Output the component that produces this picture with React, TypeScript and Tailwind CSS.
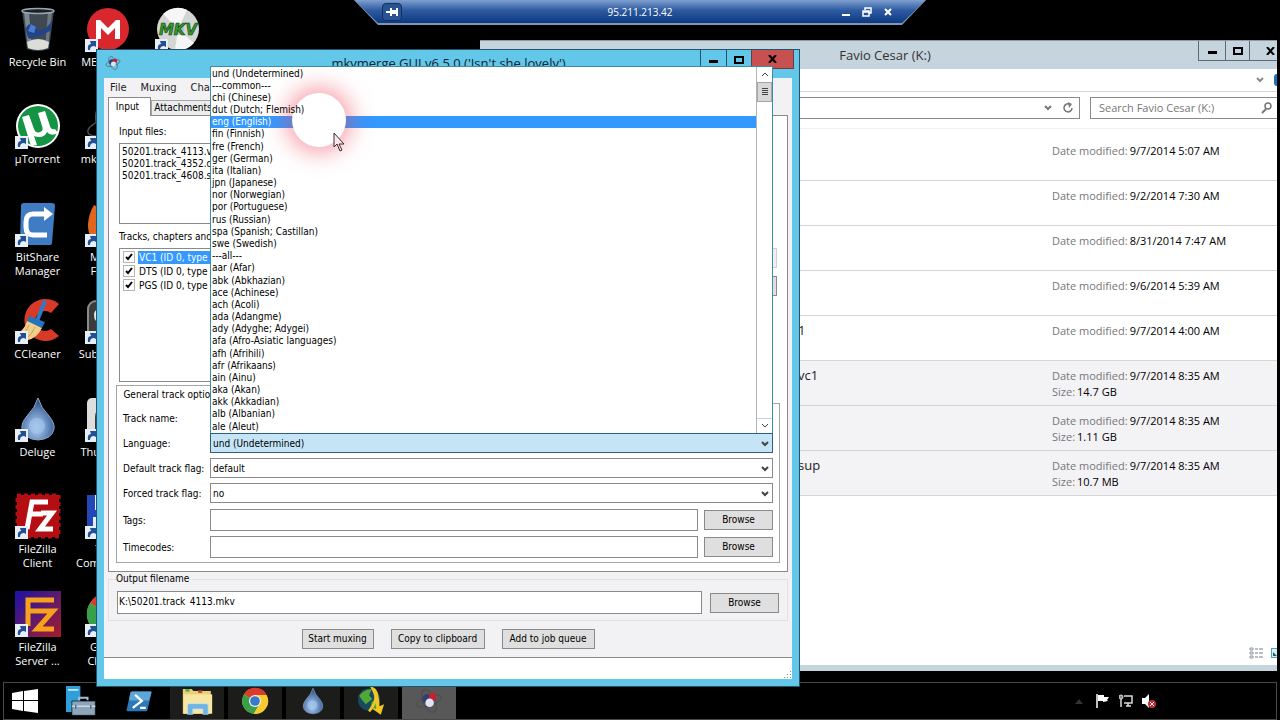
import React, { useState } from 'react';

const LANGUAGES = [
  'und (Undetermined)', '---common---', 'chi (Chinese)', 'dut (Dutch; Flemish)', 'eng (English)',
  'fin (Finnish)', 'fre (French)', 'ger (German)', 'ita (Italian)', 'jpn (Japanese)',
  'nor (Norwegian)', 'por (Portuguese)', 'rus (Russian)', 'spa (Spanish; Castillan)', 'swe (Swedish)',
  '---all---', 'aar (Afar)', 'abk (Abkhazian)', 'ace (Achinese)', 'ach (Acoli)',
  'ada (Adangme)', 'ady (Adyghe; Adygei)', 'afa (Afro-Asiatic languages)', 'afh (Afrihili)', 'afr (Afrikaans)',
  'ain (Ainu)', 'aka (Akan)', 'akk (Akkadian)', 'alb (Albanian)', 'ale (Aleut)',
];

const FILES = [
  { name: '', date: '9/7/2014 5:07 AM' },
  { name: '', date: '9/2/2014 7:30 AM' },
  { name: '', date: '8/31/2014 7:47 AM' },
  { name: '', date: '9/6/2014 5:39 AM' },
  { name: '1', date: '9/7/2014 4:00 AM' },
  { name: 'vc1', date: '9/7/2014 8:35 AM', size: '14.7 GB' },
  { name: '', date: '9/7/2014 8:35 AM', size: '1.11 GB' },
  { name: 'sup', date: '9/7/2014 8:35 AM', size: '10.7 MB' },
];

/* ---------- drawings ---------- */

const RecycleBin = () => (
  <svg viewBox="0 0 46 46" className="h-full w-full">
    <path d="M7 4 L39 4 L34 43 Q23 47 12 43Z" fill="#4b5660" opacity=".85" />
    <path d="M9 6 L14 6 L17 43 L13 42Z" fill="#a9b6c0" opacity=".6" />
    <path d="M33 6 L37 6 L33 42 L30 43Z" fill="#9aa7b2" opacity=".5" />
    <path d="M11 22 q3-6 8-3 q3 4 6 6 l7-4 l5-6 l-2 10 l-8 4 l-13 4 q-3-4-3-11z" fill="#1f4488" />
    <path d="M16 18 l5 3 l-2 6 l-6-2z" fill="#4c7ace" />
    <path d="M12 36 q11-6 22 0 l-1 6 q-10 4-20 0z" fill="#dcdcd8" />
    <ellipse cx="23" cy="5" rx="16" ry="2.5" fill="#1a2026" stroke="#9aa6ae" strokeWidth="1.5" />
  </svg>
);

const Mega = () => (
  <svg viewBox="0 0 46 46" className="h-full w-full">
    <circle cx="23" cy="23" r="21" fill="#d9272e" />
    <path d="M11 33V14h4l8 8 8-8h4v19h-5V22l-7 7-7-7v11z" fill="#fff" />
  </svg>
);

const MkvDisc = () => (
  <svg viewBox="0 0 46 46" className="h-full w-full">
    <circle cx="23" cy="23" r="21" fill="#d4d6d4" />
    <path d="M23 23L8 8A21 21 0 0 1 32 4zM23 23l16 14A21 21 0 0 1 20 44z" fill="#f6f6f6" />
    <circle cx="23" cy="23" r="6" fill="#bbb" />
    <text x="23" y="29" textAnchor="middle" fontFamily="DejaVu Sans" fontWeight="700" fontStyle="italic" fontSize="15" fill="#2f9c2a" stroke="#113a10" strokeWidth=".6">MKV</text>
  </svg>
);

const UTorrent = () => (
  <svg viewBox="0 0 46 46" className="h-full w-full">
    <circle cx="23" cy="23" r="22" fill="#fff" />
    <circle cx="23" cy="23" r="20" fill="#149444" />
    <path d="M7 14l7-2 5 14q2 5 6 3 4-1 2-6l-4-13 7-2 5 15q1 4 5 3l3 4q-7 4-11-1-2 5-8 5-3 0-5-1l3 9-6 1z" fill="#fff" />
  </svg>
);

const Atom = () => (
  <svg viewBox="0 0 46 46" className="h-full w-full">
    <ellipse cx="23" cy="23" rx="21" ry="8" fill="none" stroke="#4c4c50" strokeWidth="1.5" transform="rotate(-18 23 23)" />
    <ellipse cx="23" cy="23" rx="10" ry="20" fill="none" stroke="#4c4c50" strokeWidth="1.5" transform="rotate(-25 23 23)" />
    <circle cx="20" cy="20" r="8" fill="#343c70" />
    <circle cx="29" cy="16" r="6" fill="#c8202c" />
    <circle cx="24" cy="26" r="7" fill="#dfe3f4" />
  </svg>
);

const BitShare = () => (
  <svg viewBox="0 0 46 46" className="h-full w-full">
    <path d="M9 2H37q3 0 3 3L37 42q0 2-3 2H8q-3 0-3-3L6 5q0-3 3-3z" fill="#3f7cc4" />
    <path d="M32 13H18q-7 0-7 8v5q0 8 7 8h14" fill="none" stroke="#fff" strokeWidth="5" />
    <path d="M29 6l9 7-9 7z" fill="#fff" />
  </svg>
);

const Firefox = () => (
  <svg viewBox="0 0 46 46" className="h-full w-full">
    <circle cx="24" cy="24" r="19" fill="#2f4f9c" />
    <path d="M9 4q5 2 6 7 6-5 14-3-9 2-9 9 8-1 10 4-6 0-6 6 6 4 14-3-1 16-16 18Q2 42 3 23 4 12 9 4z" fill="#e2651d" />
  </svg>
);

const CCleaner = () => (
  <svg viewBox="0 0 46 46" className="h-full w-full">
    <path d="M44 6A21 21 0 1 0 44 38l-8-7a10 10 0 1 1 0-16z" fill="#d83a28" />
    <path d="M30 3l-8 20" stroke="#2b7bc9" strokeWidth="4" />
    <path d="M14 18l16 6-3 6-15-6z" fill="#2474bd" />
    <path d="M12 23l15 7q-5 10-14 12L1 36Q9 33 12 23z" fill="#efcf8d" />
    <path d="M14 27q-3 8-8 11M20 29q-3 7-8 11" stroke="#cf9f53" fill="none" />
  </svg>
);

const Subtitle = () => (
  <svg viewBox="0 0 46 46" className="h-full w-full">
    <rect x="3" y="3" width="40" height="40" rx="8" fill="#3b3b3b" stroke="#8b8b8b" strokeWidth="2" />
    <path d="M20 13q-9-2-9 4t6 6 3 8-9 2" stroke="#e6e6e6" strokeWidth="4" fill="none" />
  </svg>
);

const Drop = () => (
  <svg viewBox="0 0 46 46" className="h-full w-full">
    <defs>
      <radialGradient id="drop" cx=".45" cy=".7" r=".6">
        <stop offset="0" stopColor="#b9d4f0" />
        <stop offset=".5" stopColor="#7398c8" />
        <stop offset="1" stopColor="#35598c" />
      </radialGradient>
    </defs>
    <path d="M23 2q3 10 11 18 6 7 5 13-2 10-16 11Q9 43 7 33q-1-6 5-13Q20 12 23 2z" fill="url(#drop)" stroke="#8fa9c9" />
    <circle cx="22" cy="30" r="8" fill="#9fc3ea" opacity=".7" />
  </svg>
);

const Thumb = () => (
  <svg viewBox="0 0 46 46" className="h-full w-full">
    <rect x="2" y="2" width="42" height="42" rx="5" fill="#dedede" />
    <path d="M10 40V22q0-12 12-12h12v30z" fill="#3a3a3a" />
  </svg>
);

const FileZilla = () => (
  <svg viewBox="0 0 46 46" className="h-full w-full">
    <rect x="2" y="2" width="42" height="42" fill="#b40d12" stroke="#b40d12" strokeWidth="3" strokeDasharray="4 3" />
    <path d="M12 36L17 9h16M15 21h13M26 20h11L25 36h13" stroke="#fff" strokeWidth="5" fill="none" />
  </svg>
);

const FileZillaServer = () => (
  <svg viewBox="0 0 46 46" className="h-full w-full">
    <defs>
      <linearGradient id="fzs" x1="0" y1="0" x2="1" y2="1">
        <stop offset="0" stopColor="#1a12a4" />
        <stop offset=".5" stopColor="#5c1a70" />
        <stop offset="1" stopColor="#a81a28" />
      </linearGradient>
    </defs>
    <rect width="46" height="46" fill="url(#fzs)" />
    <path d="M13 35V9h26M13 20h25L22 38h17" stroke="#f7a21d" strokeWidth="5" fill="none" />
  </svg>
);

const Floppy = () => (
  <svg viewBox="0 0 46 46" className="h-full w-full">
    <path d="M2 2h42v42H2z" fill="#2447b8" />
    <path d="M10 2h26v15H10zM8 24h30v20H8z" fill="#e9ecf5" />
    <path d="M12 29h18M12 35h18" stroke="#2447b8" strokeWidth="2" />
  </svg>
);

const Chrome = () => (
  <svg viewBox="0 0 46 46" className="h-full w-full">
    <circle cx="23" cy="23" r="21" fill="#f5cb2e" />
    <path d="M23 23L5 12A21 21 0 0 1 42 13H23z" fill="#dc3a2c" />
    <path d="M23 23L5 12a21 21 0 0 0 16 32l10-17z" fill="#38a04a" />
    <path d="M42 13H23v10l8 4-10 17A21 21 0 0 0 42 13z" fill="#f5cb2e" />
    <circle cx="23" cy="23" r="10" fill="#f2f2f2" />
    <circle cx="23" cy="23" r="8" fill="#3b78c8" />
  </svg>
);

const PowerShell = () => (
  <svg viewBox="0 0 46 46" className="h-full w-full">
    <path d="M11 6h32q2 0 2 2l-7 31q0 2-3 2H3q-2 0-2-2L8 8q1-2 3-2z" fill="#2c78b8" />
    <path d="M11 6h32q2 0 2 2l-4 14H5L8 8q1-2 3-2z" fill="#5ea6d8" />
    <path d="M16 12l12 11-16 12M25 35h10" stroke="#fff" strokeWidth="4" fill="none" />
  </svg>
);

const ServerManager = () => (
  <svg viewBox="0 0 46 46" className="h-full w-full">
    <path d="M0 0h22v40H0z" fill="#2f9fdc" />
    <path d="M3 6h16" stroke="#fff" strokeWidth="2" />
    <path d="M9 23h36v22H9z" fill="#8ba5bb" stroke="#000" />
    <path d="M20 22v-4h13v4" stroke="#a9bfd0" strokeWidth="3" fill="none" />
    <path d="M9 31h36" stroke="#d5e0e8" strokeWidth="2" />
    <path d="M15 29v6M38 29v6" stroke="#4a6275" strokeWidth="2" />
  </svg>
);

const Folder = () => (
  <svg viewBox="0 0 46 42" className="h-full w-full">
    <path d="M1 3h13l3 3h26v34H1z" fill="#e9cf76" />
    <path d="M5 3h6v4H5z" fill="#5aa84c" />
    <path d="M24 5h6v4h-6z" fill="#c94a3c" />
    <path d="M2 11h43v29H2z" fill="#f6e6a2" />
    <path d="M8 41V28q0-3 3-3h25q3 0 3 3v13h-8V33H16v8z" fill="#6fb4e4" stroke="#c5e3f5" />
  </svg>
);

const Idm = () => (
  <svg viewBox="0 0 46 46" className="h-full w-full">
    <circle cx="20" cy="21" r="17" fill="#174a5e" />
    <path d="M5 15q8-11 19-10l-4 9 5 6-10 8-6-7zM24 24l8-4 4 6-8 10-6-2z" fill="#52a836" />
    <path d="M24 1q8 2 10 12 2 8 2 18l7-3-5 16-13-9 6-1q-1-20-9-32z" fill="#f3c624" />
    <path d="M30 13q2 12-10 26" stroke="#f3c624" strokeWidth="4" fill="none" />
  </svg>
);

const WindowsLogo = () => (
  <svg viewBox="0 0 26 24" className="h-full w-full">
    <path d="M0 4l11-2v9H0zM12 2l14-2v11H12zM0 12h11v10L0 20zM12 12h14v12l-14-2z" fill="#fff" />
  </svg>
);

const ShortcutArrow = () => (
  <svg viewBox="0 0 13 13" className="absolute bottom-0 left-0 h-[13px] w-[13px]">
    <path d="M0 0h13v13H0z" fill="#e8eef5" />
    <path d="M3 11Q2 5 6 5L5 2h6v6L9 7q-4 0-4 4z" fill="#234f94" />
  </svg>
);

const Chevron: React.FC<{ className?: string; up?: boolean; thin?: boolean }> = ({ className = '', up = false, thin = false }) => (
  <svg viewBox="0 0 8 6" className={`h-[6px] w-2 ${className}`}>
    <path d={up ? 'M1 5l3-3 3 3' : 'M1 1l3 3 3-3'} fill="none" stroke="currentColor" strokeWidth={thin ? 1 : 2} />
  </svg>
);

/* ---------- desktop ---------- */

const DESKTOP = [
  { label: 'Recycle Bin', Icon: RecycleBin, plain: true },
  { label: 'MEGAsync', Icon: Mega },
  { label: '', Icon: MkvDisc },
  { label: 'µTorrent', Icon: UTorrent },
  { label: 'mkvmerge', Icon: Atom },
  null,
  { label: 'BitShare Manager', Icon: BitShare },
  { label: 'Mozilla Firefox', Icon: Firefox },
  null,
  { label: 'CCleaner', Icon: CCleaner },
  { label: 'SubtitleEdit', Icon: Subtitle },
  null,
  { label: 'Deluge', Icon: Drop },
  { label: 'Thumbnail', Icon: Thumb },
  null,
  { label: 'FileZilla Client', Icon: FileZilla },
  { label: 'Total Commander', Icon: Floppy },
  null,
  { label: 'FileZilla Server ...', Icon: FileZillaServer },
  { label: 'Google Chrome', Icon: Chrome },
  null,
];

const DesktopIcons = () => (
  <div className="grid min-h-0 flex-1 auto-rows-fr grid-cols-[71px_70px_70px] content-stretch pl-[2px]">
    {DESKTOP.map((item, i) =>
      item ? (
        <button key={i} type="button" className="flex flex-col items-center pt-[6px]">
          <span className="relative h-[46px] w-[46px] shrink-0">
            <item.Icon />
            {!item.plain && <ShortcutArrow />}
          </span>
          <span className="w-[64px] pt-[3px] text-center text-[11px] leading-[14px] text-white">{item.label}</span>
        </button>
      ) : (
        <span key={i} />
      )
    )}
  </div>
);

const ConnectionBar = () => (
  <div className="absolute left-1/2 top-0 z-30 h-[25px] w-[572px] -translate-x-1/2 bg-[#8494b0] pb-[2px] [clip-path:polygon(0_0,100%_0,calc(100%-24px)_100%,24px_100%)]">
    <div className="grid h-full grid-cols-[1fr_auto_1fr] items-center bg-linear-to-b from-[#7fa0d0] via-[#2d5aa0] via-45% to-[#0b3a80] pl-7 pr-[34px] text-white [clip-path:polygon(0_0,100%_0,calc(100%-24px)_100%,24px_100%)]">
      <button type="button" aria-label="Pin" className="flex h-[18px] w-5 items-center justify-center rounded-sm border border-[#16305f] bg-[#2a5394]">
        <svg viewBox="0 0 12 8" className="h-2 w-3">
          <path d="M0 4h5M5 0v8M5 3h6M5 5h6M11 0v8" stroke="#fff" strokeWidth="2" />
        </svg>
      </button>
      <span className="pl-[6px] text-[10px] leading-4">95.211.213.42</span>
      <div className="flex items-center justify-end gap-3">
        <button type="button" aria-label="Minimize" className="h-2 w-2 border-b-2 border-white" />
        <button type="button" aria-label="Restore">
          <svg viewBox="0 0 10 10" className="h-[10px] w-[10px]">
            <path d="M3 3V1h6v5H7M1 4h6v5H1zM1 5h6" fill="none" stroke="#fff" strokeWidth="1.5" />
          </svg>
        </button>
        <button type="button" aria-label="Close">
          <svg viewBox="0 0 8 8" className="h-2 w-2">
            <path d="M1 1l6 6M7 1L1 7" stroke="#fff" strokeWidth="2" />
          </svg>
        </button>
      </div>
    </div>
  </div>
);

/* ---------- explorer window ---------- */

const ExplorerWindow = () => (
  <section className="absolute bottom-[49px] left-[480px] right-[3px] top-[40px] flex flex-col overflow-hidden border-b-[6px] border-[#c6d4de] bg-white">
    <header className="flex h-[29px] shrink-0 border-t border-[#8f9ba3] bg-[#c6d4de]">
      <h2 className="flex-1 pl-[92px] pt-1 text-center text-[13px] leading-5 text-[#333]">Favio Cesar (K:)</h2>
      <div className="flex h-[20px] w-[79px] shrink-0 border-b border-l border-[#5b6a74] text-black">
        <button type="button" aria-label="Minimize" className="flex w-[26px] items-center justify-center pt-1">
          <span className="h-[3px] w-[9px] bg-black" />
        </button>
        <button type="button" aria-label="Maximize" className="flex w-[25px] items-center justify-center border-x border-[#5b6a74]">
          <span className="h-2 w-[10px] border-2 border-black" />
        </button>
        <button type="button" aria-label="Close" className="flex flex-1 items-center justify-end pr-[2px]">
          <svg viewBox="0 0 9 8" className="h-2 w-[9px]">
            <path d="M1 0l7 8M8 0L1 8" stroke="#000" strokeWidth="2" />
          </svg>
        </button>
      </div>
    </header>
    <div className="flex h-[23px] shrink-0 items-center justify-end gap-[10px] border-b border-[#d8d8d8] text-[#888]">
      <Chevron />
      <span className="h-3 w-[3px] rounded-l-full bg-[#1d72b8]" />
    </div>
    <div className="flex h-[37px] shrink-0 items-start gap-[10px] border-b border-[#efefef] pt-[5px]">
      <div className="flex h-[22px] flex-1 items-center justify-end gap-[10px] border border-[#8a8a8a] pr-[5px] text-[#777]">
        <Chevron />
        <svg viewBox="0 0 12 12" className="h-3 w-3">
          <path d="M10 6A4 4 0 1 1 7 2" fill="none" stroke="currentColor" strokeWidth="1.5" />
          <path d="M6 0l4 2-3 4z" fill="currentColor" />
        </svg>
      </div>
      <label className="flex h-[22px] w-[187px] items-center border border-r-0 border-[#8a8a8a] pl-2 pr-1">
        <input aria-label="Search" placeholder="Search Favio Cesar (K:)" className="w-full min-w-0 text-[11px] outline-none placeholder:text-[#777]" />
        <svg viewBox="0 0 12 12" className="h-3 w-3 shrink-0">
          <circle cx="7" cy="4" r="3" fill="none" stroke="#777" strokeWidth="1.5" />
          <path d="M5 7l-4 4" stroke="#777" strokeWidth="2" />
        </svg>
      </label>
    </div>
    <ul className="min-h-0 flex-1 pt-[7px]">
      {FILES.map((file, i) => (
        <li key={i} className={`flex h-[45px] border-b border-[#d6d6d8] ${file.size ? 'bg-[#f3f2f5]' : ''}`}>
          <span className="flex-1 pl-[318px] pt-1 text-[13px] leading-5 text-[#222]">{file.name}</span>
          <dl className="w-[225px] pt-[7px] text-[11px] leading-4 text-black">
            <div className="flex gap-[2px]">
              <dt className="text-[#777]">Date modified:</dt>
              <dd>{file.date}</dd>
            </div>
            {file.size && (
              <div className="flex gap-[2px]">
                <dt className="text-[#777]">Size:</dt>
                <dd>{file.size}</dd>
              </div>
            )}
          </dl>
        </li>
      ))}
    </ul>
    <footer className="flex h-6 items-center justify-end gap-2">
      <svg viewBox="0 0 14 12" className="h-3 w-[14px]">
        <path d="M1 1h3v2H1zM1 5h3v2H1zM1 9h3v2H1z" fill="none" stroke="#8b96a0" />
        <path d="M6 2h3M10 2h4M6 6h3M10 6h4M6 10h3M10 10h4" stroke="#7a7f88" />
      </svg>
      <svg viewBox="0 0 6 10" className="h-[10px] w-[6px]">
        <path d="M6 0H0v10h6" fill="#d8eef5" stroke="#5aa0b4" strokeWidth="2" />
        <path d="M2 4l4 4H2z" fill="#1f5a6c" />
      </svg>
    </footer>
  </section>
);

/* ---------- mkvmerge window ---------- */

const PushButton: React.FC<{ children: React.ReactNode; className?: string }> = ({ children, className = '' }) => (
  <button type="button" className={`h-5 border border-[#8a8a8a] bg-[#dfdfdf] text-center leading-4 text-black ${className}`}>
    {children}
  </button>
);

const TextRow: React.FC<{ id: string; label: string }> = ({ id, label }) => (
  <div className="flex h-[27px] items-end pb-[2px]">
    <label htmlFor={id} className="w-[87px] pb-1">{label}</label>
    <input id={id} className="h-[22px] min-w-0 flex-1 border border-[#8a8a8a] bg-white px-1 outline-none" />
    <PushButton className="mb-px ml-[6px] w-[69px]">Browse</PushButton>
  </div>
);

const SelectRow: React.FC<{ id: string; label: string; value: string; active?: boolean; children?: React.ReactNode }> = ({ id, label, value, active, children }) => (
  <div className="flex h-[25px] items-center">
    <label htmlFor={id} className="w-[87px] whitespace-nowrap pt-[2px]">{label}</label>
    <div className="relative flex-1">
      <select
        id={id}
        className={`block h-5 w-full appearance-none border pl-[2px] pt-[2px] outline-none ${active ? 'border-[#2b6180] bg-[#c5e5f7]' : 'border-[#8a8a8a] bg-white'}`}
      >
        <option>{value}</option>
      </select>
      <Chevron className="pointer-events-none absolute right-1 top-2 text-[#444]" />
      {children}
    </div>
  </div>
);

const Highlight = () => (
  <>
    <span
      aria-hidden
      className="pointer-events-none absolute left-[81px] top-[26px] z-10 h-[54px] w-[54px] rounded-full bg-white shadow-[0_0_22px_6px_rgba(240,70,90,0.5)]"
    />
    <svg viewBox="0 0 12 20" className="pointer-events-none absolute left-[122px] top-[65px] z-30 h-5 w-3">
      <path d="M1 1v14l3-3 3 7 2-1-3-6h5z" fill="#fbe9ec" stroke="#3c2a2e" />
    </svg>
  </>
);

const LanguageList: React.FC = () => {
  const [selected, setSelected] = useState('eng (English)');
  return (
    <div className="absolute bottom-full left-0 right-0 z-20 flex h-[367px] border border-b-0 border-[#3b8ea8] bg-white">
      <ul role="listbox" aria-label="Languages" className="flex min-w-0 flex-1 flex-col pt-px">
        {LANGUAGES.map(lang => (
          <li
            key={lang}
            role="option"
            aria-selected={lang === selected}
            onClick={() => setSelected(lang)}
            className={`flex min-h-0 flex-1 items-center pl-px ${lang === selected ? 'bg-[#3399ff] text-white' : 'text-black'}`}
          >
            <span className="relative z-20 leading-3">{lang}</span>
          </li>
        ))}
      </ul>
      <div className="flex w-4 shrink-0 flex-col items-center border-l border-[#b5b5b5]">
        <button type="button" aria-label="Scroll up" className="flex h-[15px] items-center text-[#444]">
          <Chevron up thin />
        </button>
        <div className="flex h-5 w-full flex-col items-center justify-center gap-px border border-[#a5a5a5] bg-[#d8d8d8]">
          <span className="h-px w-[6px] bg-[#444]" />
          <span className="h-px w-[6px] bg-[#444]" />
          <span className="h-px w-[6px] bg-[#444]" />
          <span className="h-px w-[6px] bg-[#444]" />
        </div>
        <button type="button" aria-label="Scroll down" className="mt-auto flex h-[15px] w-full items-center justify-center border-t border-[#b5dbe6] text-[#444]">
          <Chevron thin />
        </button>
      </div>
      <Highlight />
    </div>
  );
};

const TRACKS = ['VC1 (ID 0, type', 'DTS (ID 0, type', 'PGS (ID 0, type'];

const MuxWindow = () => (
  <section className='absolute left-[96px] top-[49px] z-20 flex w-[704px] flex-col border border-[#25536b] bg-[#62c7e8] px-[7px] pb-[7px] font-["DejaVu_Sans_Condensed","DejaVu_Sans",sans-serif] text-[10px] leading-3 text-black'>
    <header className='flex h-7 items-start font-["Open_Sans",sans-serif]'>
      <span className="mt-[5px] ml-px h-4 w-4 shrink-0">
        <Atom />
      </span>
      <h1 className="flex-1 pl-[76px] pt-[3px] text-center text-[13px] leading-5 text-[#123]">mkvmerge GUI v6.5.0 ('Isn't she lovely')</h1>
      <div className="-mr-[2px] flex h-[19px] w-[94px] shrink-0">
        <button type="button" aria-label="Minimize" className="flex w-[26px] items-center justify-center border-l border-[#25536b] pt-1">
          <span className="h-[3px] w-[9px] bg-black" />
        </button>
        <button type="button" aria-label="Maximize" className="flex w-[25px] items-center justify-center border-l border-[#25536b]">
          <span className="h-2 w-[10px] border-2 border-black" />
        </button>
        <button type="button" aria-label="Close" className="flex flex-1 items-center justify-center border border-t-0 border-[#6e3a3f] bg-[#c75050]">
          <svg viewBox="0 0 9 8" className="h-2 w-[9px]">
            <path d="M1 0l7 8M8 0L1 8" stroke="#000" strokeWidth="2" />
          </svg>
        </button>
      </div>
    </header>

    <div className="flex flex-col bg-[#f2f1f4] px-1">
      <nav className="flex h-[18px] items-center gap-[14px] pl-[2px] pt-px text-[11px] text-[#222]">
        <button type="button">File</button>
        <button type="button">Muxing</button>
        <button type="button">Cha</button>
      </nav>

      <div className="flex h-[19px] items-end">
        <button type="button" className="relative -mb-px h-[19px] w-[43px] border border-b-0 border-[#8a8a8a] bg-white pr-1">Input</button>
        <button type="button" className="h-[15px] w-[64px] border border-b-0 border-[#a5a5a5] bg-[#ececef]">Attachments</button>
      </div>

      <div className="border border-[#8a8a8a] bg-white px-[7px] pb-2 pt-[10px]">
        <p className="pl-[3px]">Input files:</p>
        <ul className="ml-[3px] mt-[5px] h-[81px] w-[580px] border border-[#8a8a8a] pl-[2px] pt-[2px]">
          <li>50201.track_4113.v</li>
          <li>50201.track_4352.d</li>
          <li>50201.track_4608.s</li>
        </ul>
        <p className="mt-[7px] pl-[3px]">Tracks, chapters and</p>
        <div className="mt-[5px] flex justify-between pl-[3px] pr-[3px]">
          <ul className="h-[134px] w-[580px] border border-[#8a8a8a] pt-px">
            {TRACKS.map((track, i) => (
              <li key={track} className="flex h-[14px] items-center pl-[3px]">
                <label className="flex items-center gap-[3px]">
                  <span className="relative h-3 w-3">
                    <input type="checkbox" defaultChecked className="peer block h-3 w-3 appearance-none border border-[#b5b5b5] bg-white" />
                    <svg viewBox="0 0 12 12" className="pointer-events-none absolute inset-0 hidden h-3 w-3 peer-checked:block">
                      <path d="M3 6l2 2 4-5" fill="none" stroke="#000" strokeWidth="2" />
                    </svg>
                  </span>
                  <span className={`h-[13px] w-[80px] pl-px leading-[13px] ${i === 0 ? 'bg-[#3399ff] text-white' : ''}`}>{track}</span>
                </label>
              </li>
            ))}
          </ul>
          <div className="flex flex-col gap-2">
            <button type="button" aria-label="Move up" className="h-5 w-[72px] border border-[#cfcfcf] bg-[#efefef]" />
            <button type="button" aria-label="Move down" className="h-5 w-[72px] border border-[#8a8a8a] bg-[#dfdfdf]" />
          </div>
        </div>

        <div className="mt-[3px] flex">
          <button type="button" className="relative -mb-px h-[19px] w-[112px] border border-b-0 border-[#a5a5a5] bg-white">General track options</button>
        </div>
        <div className="border border-[#a5a5a5] pb-[2px] pl-[6px] pr-[6px] pt-[2px]">
          <div className="flex h-6 items-center">
            <label htmlFor="track-name" className="w-[87px] pt-[2px]">Track name:</label>
            <input id="track-name" className="h-5 min-w-0 flex-1 border border-[#8a8a8a] px-1 outline-none" />
          </div>
          <SelectRow id="language" label="Language:" value="und (Undetermined)" active>
            <LanguageList />
          </SelectRow>
          <SelectRow id="default-flag" label="Default track flag:" value="default" />
          <SelectRow id="forced-flag" label="Forced track flag:" value="no" />
          <div className="pt-px">
            <TextRow id="tags" label="Tags:" />
            <TextRow id="timecodes" label="Timecodes:" />
          </div>
        </div>
      </div>

      <fieldset className="mt-px border border-[#e0e0e3] pb-[6px] pl-2 pr-2">
        <legend className="-ml-px">Output filename</legend>
        <div className="flex items-center pt-[6px]">
          <input
            aria-label="Output filename"
            defaultValue="K:\50201.track_4113.mkv"
            className="h-[23px] min-w-0 flex-1 border border-[#8a8a8a] bg-white pb-[3px] pl-px leading-[18px] outline-none"
          />
          <PushButton className="ml-2 w-[69px]">Browse</PushButton>
        </div>
      </fieldset>

      <div className="flex justify-center gap-[17px] pb-2 pt-2">
        <PushButton className="w-[72px]">Start muxing</PushButton>
        <PushButton className="w-[94px]">Copy to clipboard</PushButton>
        <PushButton className="w-[93px]">Add to job queue</PushButton>
      </div>
    </div>
    <footer className="flex h-[22px] items-end justify-end border-t border-[#8a8a8a] bg-white">
      <svg viewBox="0 0 8 8" className="h-2 w-2">
        <path d="M6 0h1v1H6zM3 3h1v1H3zM6 3h1v1H6zM0 6h1v1H0zM3 6h1v1H3zM6 6h1v1H6z" fill="#888" />
      </svg>
    </footer>
  </section>
);

/* ---------- taskbar ---------- */

const TASKS = [
  { name: 'Server Manager', Icon: ServerManager, size: 'h-[30px] w-[30px]', tile: '' },
  { name: 'PowerShell', Icon: PowerShell, size: 'h-[26px] w-[26px]', tile: '' },
  { name: 'File Explorer', Icon: Folder, size: 'h-7 w-[31px]', tile: 'bg-[#1c1d1b]' },
  { name: 'Chrome', Icon: Chrome, size: 'h-7 w-7', tile: 'bg-[#1c1d1b]' },
  { name: 'Deluge', Icon: Drop, size: 'h-7 w-7', tile: 'bg-[#1c1d1b]' },
  { name: 'Download Manager', Icon: Idm, size: 'h-[30px] w-[30px]', tile: 'bg-[#1c1d1b]' },
  { name: 'mkvmerge', Icon: Atom, size: 'h-7 w-7', tile: 'bg-[#585858]' },
];

const Taskbar = () => (
  <footer className="ml-[3px] mr-[3px] flex h-[38px] shrink-0 items-center gap-1 border border-[#484848]">
    <button type="button" aria-label="Start" className="flex h-full w-[46px] items-center justify-center pr-1">
      <span className="h-6 w-[26px]">
        <WindowsLogo />
      </span>
    </button>
    {TASKS.map(({ name, Icon, size, tile }) => (
      <button key={name} type="button" aria-label={name} className={`flex h-full w-[54px] items-center justify-center ${tile}`}>
        <span className={size}>
          <Icon />
        </span>
      </button>
    ))}
    <div className="ml-auto mr-[120px] flex items-center gap-[9px]">
      <svg viewBox="0 0 8 5" className="mr-1 h-[5px] w-2">
        <path d="M4 0l4 5H0z" fill="#333" />
      </svg>
      <svg viewBox="0 0 14 14" className="h-[14px] w-[14px]">
        <path d="M1 0v14" stroke="#fff" strokeWidth="1.5" />
        <path d="M2 1h6v2h5l-2 3 1 1-5 1V7H2z" fill="#fff" />
      </svg>
      <svg viewBox="0 0 14 14" className="h-[14px] w-[14px]">
        <path d="M5 2h8v7H5M7 12h5M9 9v3M2 5v8" fill="none" stroke="#ddd" strokeWidth="1.5" />
        <circle cx="2" cy="3" r="2" fill="#888" stroke="#ddd" />
      </svg>
      <svg viewBox="0 0 14 14" className="h-[14px] w-[14px]">
        <path d="M0 4h3l4-4v14l-4-4H0z" fill="#fff" />
        <circle cx="10" cy="10" r="4" fill="#c92a2f" />
        <path d="M8 8l4 4M12 8l-4 4" stroke="#fff" />
      </svg>
    </div>
  </footer>
);

const App: React.FC = () => (
  <main className='relative flex h-screen w-full flex-col overflow-hidden bg-black font-["Open_Sans","Noto_Sans",sans-serif]'>
    <DesktopIcons />
    <ConnectionBar />
    <ExplorerWindow />
    <MuxWindow />
    <Taskbar />
  </main>
);

export default App;
